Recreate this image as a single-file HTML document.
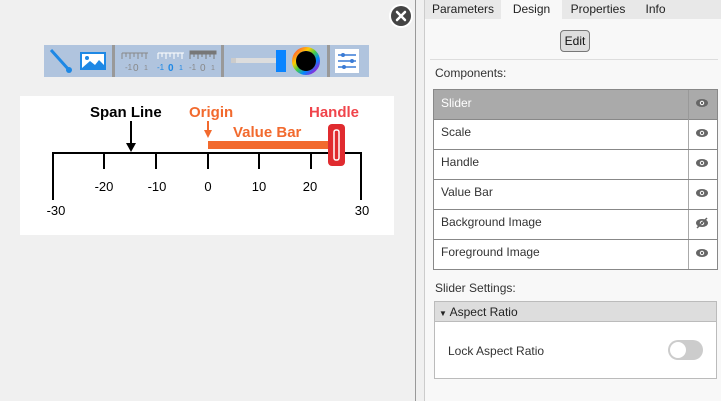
<!DOCTYPE html>
<html><head><style>
*{box-sizing:border-box;margin:0;padding:0}
body{width:721px;height:401px;overflow:hidden;background:#f0f0f0;font-family:"Liberation Sans",Arial,sans-serif;font-size:12px;color:#333;position:relative}
.abs{position:absolute}
.tab{position:absolute;top:0;height:19px;font-size:12px;color:#222;text-align:center;line-height:19px;background:#e8e8e8}
.row{position:absolute;left:433px;width:285px;height:30px;border:1px solid #888;border-top:none;background:#fff}
.row span{position:absolute;left:7px;top:5px;font-size:12px;color:#333}
.row .eye{position:absolute;left:254px;top:0;width:30px;height:29px;border-left:1px solid #aaa}
</style></head><body>
<div class="abs" style="left:415px;top:0;width:1px;height:401px;background:#999"></div>
<div class="abs" style="left:424px;top:0;width:297px;height:401px;background:#f8f8f8;border-left:1px solid #ccc"></div>
<div class="abs" style="left:425px;top:0;width:296px;height:19px;background:#e8e8e8"></div>
<div class="tab" style="left:426px;width:74px">Parameters</div>
<div class="tab" style="left:501px;width:61px;background:#f8f8f8;height:20px">Design</div>
<div class="tab" style="left:563px;width:70px">Properties</div>
<div class="tab" style="left:634px;width:43px">Info</div>
<div class="abs" style="left:560px;top:30px;width:30px;height:22px;border:1px solid #777;border-radius:4px;background:#ddd;font-size:12px;text-align:center;line-height:20px;color:#111">Edit</div>
<div class="abs" style="left:430px;top:59px;width:288px;height:1px;background:#ddd"></div>
<div class="abs" style="left:435px;top:66px">Components:</div>
<div class="row" style="top:89px;border-top:1px solid #888;background:#aaa;height:31px"><span style="color:#fff;top:6px">Slider</span><div class="eye" style="height:30px;border-left-color:#999"></div></div>
<div class="row" style="top:120px"><span>Scale</span><div class="eye"></div></div>
<div class="row" style="top:150px"><span>Handle</span><div class="eye"></div></div>
<div class="row" style="top:180px"><span>Value Bar</span><div class="eye"></div></div>
<div class="row" style="top:210px"><span>Background Image</span><div class="eye"></div></div>
<div class="row" style="top:240px"><span>Foreground Image</span><div class="eye"></div></div>
<svg class="abs" style="left:0;top:0" width="721" height="401">
<g fill="#666">
<g transform="translate(702,103)"><ellipse rx="6" ry="4"/><circle r="2.2" fill="#fff"/><circle r="1.2"/></g>
<g transform="translate(702,133)"><ellipse rx="6" ry="4"/><circle r="2.2" fill="#fff"/><circle r="1.2"/></g>
<g transform="translate(702,163)"><ellipse rx="6" ry="4"/><circle r="2.2" fill="#fff"/><circle r="1.2"/></g>
<g transform="translate(702,193)"><ellipse rx="6" ry="4"/><circle r="2.2" fill="#fff"/><circle r="1.2"/></g>
<g transform="translate(702,223)"><ellipse rx="6" ry="4"/><circle r="2.2" fill="#fff"/><circle r="1.2"/><line x1="-5" y1="5" x2="5" y2="-5" stroke="#666" stroke-width="1.5"/></g>
<g transform="translate(702,253)"><ellipse rx="6" ry="4"/><circle r="2.2" fill="#fff"/><circle r="1.2"/></g>
</g>
</svg>
<div class="abs" style="left:435px;top:281px">Slider Settings:</div>
<div class="abs" style="left:434px;top:301px;width:283px;height:78px;border:1px solid #bbb;background:#fff"></div>
<div class="abs" style="left:435px;top:302px;width:281px;height:20px;background:#ddd;border-bottom:1px solid #bbb;line-height:20px;padding-left:4px;font-size:12px;color:#222"><span style="font-size:8px">&#9660;</span> Aspect Ratio</div>
<div class="abs" style="left:448px;top:344px;color:#333">Lock Aspect Ratio</div>
<div class="abs" style="left:668px;top:340px;width:35px;height:20px;border-radius:10px;background:#ccc"><div style="position:absolute;left:2px;top:2px;width:16px;height:16px;border-radius:50%;background:#fff"></div></div>

<svg class="abs" style="left:388px;top:3px" width="26" height="26"><circle cx="13" cy="13" r="12" fill="#fff"/><circle cx="13" cy="13" r="10" fill="#444"/><path d="M9 9L17 17M17 9L9 17" stroke="#fff" stroke-width="2.5" stroke-linecap="round"/></svg>

<svg class="abs" style="left:44px;top:45px" width="325" height="32">
<rect width="325" height="32" fill="#b0c4de"/>
<rect x="68" y="0" width="3" height="32" fill="#999"/>
<rect x="177" y="0" width="3" height="32" fill="#999"/>
<rect x="283" y="0" width="3" height="32" fill="#999"/>
<path d="M7 5L25 25" stroke="#1e88e5" stroke-width="3"/><circle cx="25" cy="25" r="3" fill="#1e88e5"/>
<rect x="37" y="8" width="24" height="16" fill="#fff" stroke="#1e88e5" stroke-width="2"/><path d="M38 23L46 16L51 20L55 15L60 20V23Z" fill="#1e88e5"/><circle cx="43" cy="13" r="2" fill="#1e88e5"/>
<g stroke="#888" fill="none"><path d="M78 8H104M78 8V14M82 8V12M86 8V14M90 8V12M94 8V14M98 8V12M102 8V14"/></g>
<text x="81" y="25" font-size="8" fill="#888">-1</text><text x="89" y="26" font-size="10" fill="#888">0</text><text x="100" y="25" font-size="7" fill="#888">1</text>
<g stroke="#fff" fill="none"><path d="M114 8H140M114 8V14M118 8V12M122 8V14M126 8V12M130 8V14M134 8V12M138 8V14"/></g>
<text x="113" y="25" font-size="8" fill="#1e88e5">-1</text><text x="124" y="26" font-size="10" font-weight="bold" fill="#1e88e5">0</text><text x="135" y="25" font-size="7" fill="#1e88e5">1</text>
<g stroke="#777" fill="none"><path d="M146 8H172M146 8V14M150 8V12M154 8V14M158 8V12M162 8V14M166 8V12M170 8V14"/><rect x="146" y="6" width="26" height="3" fill="#777"/></g>
<text x="145" y="25" font-size="8" fill="#888">-1</text><text x="156" y="26" font-size="10" fill="#888">0</text><text x="167" y="25" font-size="7" fill="#888">1</text>
<rect x="187" y="13" width="48" height="5" fill="#ccc"/><rect x="192" y="13" width="43" height="5" fill="#ddd"/>
<rect x="232" y="5" width="10" height="22" fill="#0a84ff"/>
<defs><linearGradient id="g" x1="0" y1="0" x2="1" y2="1"><stop offset="0" stop-color="#f44"/><stop offset=".3" stop-color="#fc0"/><stop offset=".5" stop-color="#4c4"/><stop offset=".7" stop-color="#08f"/><stop offset="1" stop-color="#c0c"/></linearGradient></defs>
<circle cx="262" cy="16" r="12" fill="none" stroke="url(#g)" stroke-width="4"/>
<circle cx="262" cy="16" r="10" fill="#000"/>
<rect x="291" y="4" width="24" height="24" fill="#fff"/>
<g stroke="#3a7bd5" stroke-width="1.5"><path d="M294 10H312M294 16H312M294 22H312"/></g>
<g fill="#3a7bd5"><circle cx="299" cy="10" r="2"/><circle cx="308" cy="16" r="2"/><circle cx="300" cy="22" r="2"/></g>
</svg>

<svg class="abs" style="left:20px;top:96px" width="374" height="139" font-family="Liberation Sans,Arial,sans-serif">
<rect width="374" height="139" fill="#fff"/>
<g stroke="#000" stroke-width="2"><path d="M33 57H342M33 56V104M341 56V104M84 56V73M136 56V73M188 56V73M239 56V73M291 56V73"/></g>
<g font-size="13" text-anchor="middle" fill="#000"><text x="36" y="119">-30</text><text x="84" y="95">-20</text><text x="137" y="95">-10</text><text x="188" y="95">0</text><text x="239" y="95">10</text><text x="290" y="95">20</text><text x="342" y="119">30</text></g>
<text x="70" y="21" font-size="15" font-weight="bold" fill="#000">Span Line</text>
<path d="M111 25V52" stroke="#000" stroke-width="2"/><path d="M106 47L111 56L116 47Z" fill="#000"/>
<text x="169" y="21" font-size="15" font-weight="bold" fill="#f26a2e">Origin</text>
<path d="M188 25V37" stroke="#f26a2e" stroke-width="2"/><path d="M184 34L188 42L192 34Z" fill="#f26a2e"/>
<text x="213" y="41" font-size="15" font-weight="bold" fill="#f26a2e">Value Bar</text>
<rect x="188" y="45" width="122" height="8" fill="#f26a2e"/>
<text x="289" y="21" font-size="15" font-weight="bold" fill="#f0444b">Handle</text>
<rect x="308" y="28" width="17" height="42" rx="4" fill="#e02b2f"/><rect x="314" y="34" width="5" height="30" rx="2" fill="none" stroke="#fff" stroke-width="1.5"/>
</svg>
</body></html>
